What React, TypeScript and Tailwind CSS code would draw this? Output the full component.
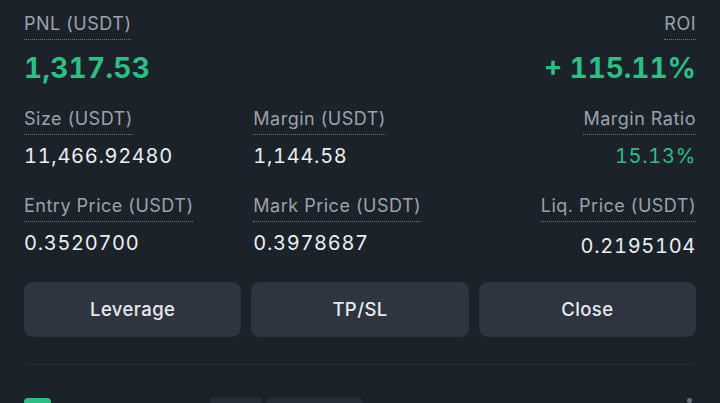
import React from "react";

const Label = ({ children, right }: { children: React.ReactNode; right?: boolean }) => (
  <div className={right ? "flex justify-end" : "flex"}>
    <span className="text-[18px] leading-[24px] tracking-[0.5px] text-[#9ca2aa] border-b border-dotted border-[#6f767f] pb-[3px]">
      {children}
    </span>
  </div>
);

const Value = ({ children, right, green, mt }: { children: React.ReactNode; right?: boolean; green?: boolean; mt?: string }) => (
  <div
    className={`${mt ?? "mt-[8px]"} text-[20px] leading-[26px] tabular-nums tracking-[0.7px] ${right ? "text-right" : ""} ${green ? "text-[#2ebd85]" : "text-[#eceef0]"}`}
  >
    {children}
  </div>
);

export default function App() {
  return (
    <div
      className="w-[720px] h-[403px] overflow-hidden bg-[#1b222a] px-[24px] pt-[12px]"
      style={{ fontFamily: "Inter, 'Noto Sans', sans-serif" }}
    >
      <div className="flex justify-between">
        <div>
          <Label>PNL (USDT)</Label>
          <div className="mt-[12px] text-[28px] leading-[32px] font-bold tabular-nums tracking-[0.3px] text-[#2ebd85]">1,317.53</div>
        </div>
        <div>
          <Label right>ROI</Label>
          <div className="mt-[12px] text-[28px] leading-[32px] font-bold tabular-nums tracking-[0px] text-[#2ebd85] text-right">+ 115.11%</div>
        </div>
      </div>

      <div className="grid grid-cols-3 gap-x-[10px] mt-[23px]">
        <div>
          <Label>Size (USDT)</Label>
          <Value>11,466.92480</Value>
        </div>
        <div className="pl-[2px]">
          <Label>Margin (USDT)</Label>
          <Value>1,144.58</Value>
        </div>
        <div>
          <Label right>Margin Ratio</Label>
          <Value right green>15.13%</Value>
        </div>
      </div>

      <div className="grid grid-cols-3 gap-x-[10px] mt-[25px]">
        <div>
          <Label>Entry Price (USDT)</Label>
          <Value>0.3520700</Value>
        </div>
        <div className="pl-[2px]">
          <Label>Mark Price (USDT)</Label>
          <Value>0.3978687</Value>
        </div>
        <div>
          <Label right>Liq. Price (USDT)</Label>
          <Value right mt="mt-[11px]">0.2195104</Value>
        </div>
      </div>

      <div className="grid grid-cols-3 gap-x-[10px] mt-[23px]">
        {["Leverage", "TP/SL", "Close"].map((t) => (
          <div
            key={t}
            className="h-[55px] rounded-[9px] bg-[#2e3440] flex items-center justify-center text-[18.5px] font-medium tracking-[0.4px] text-[#e8eaed]"
          >
            {t}
          </div>
        ))}
      </div>

      <div className="mt-[27px] mx-[2px] h-px bg-[#2a3039]" />

      <div className="mt-[33px] flex items-start">
        <div className="w-[27px] h-[20px] rounded-[4px] bg-[#2ebd85]" />
        <div className="ml-[159px] w-[52px] h-[20px] rounded-[3px] bg-[#262d36]" />
        <div className="ml-[5px] w-[95px] h-[20px] rounded-[3px] bg-[#262d36]" />
        <div className="ml-auto mr-[4px] w-[5px] h-[5px] rounded-full bg-[#6b7280]" />
      </div>
    </div>
  );
}
